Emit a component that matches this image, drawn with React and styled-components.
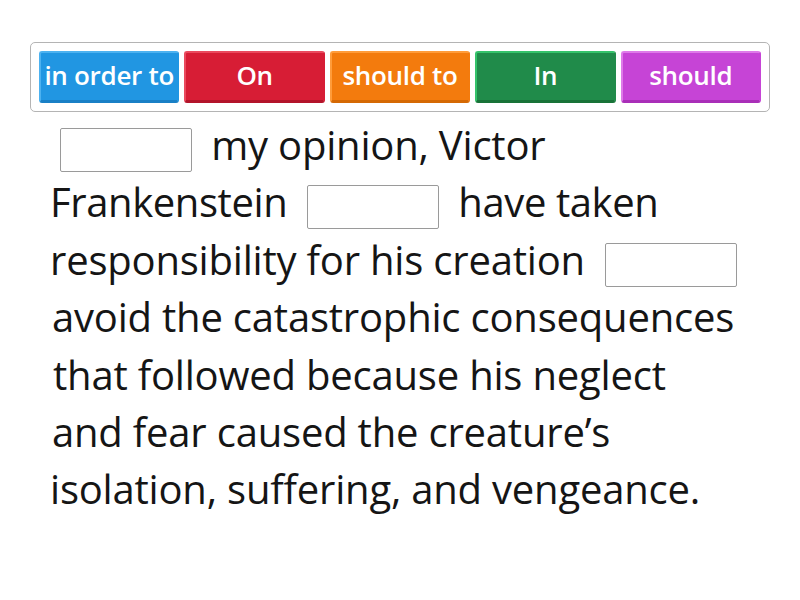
import React from "react";
import styled, { createGlobalStyle } from "styled-components";

const GlobalStyle = createGlobalStyle`
  body {
    margin: 0;
    background: #ffffff;
    font-family: "Open Sans", "Liberation Sans", sans-serif;
  }
`;

const chips = [
  { text: "in order to", body: "#2196e2", light: "#4db2f0", dark: "#1980c6" },
  { text: "On", body: "#d71d35", light: "#ea4a5e", dark: "#b3142a" },
  { text: "should to", body: "#f37b0d", light: "#ff9c3a", dark: "#d56904" },
  { text: "In", body: "#208b4a", light: "#35c36b", dark: "#187338" },
  { text: "should", body: "#c644d6", light: "#de7ae9", dark: "#a92fb8" }
];

const App = () => (
  <Page>
    <GlobalStyle />
    <Bank>
      {chips.map(c => (
        <Chip key={c.text} body={c.body} light={c.light} dark={c.dark}>
          {c.text}
        </Chip>
      ))}
    </Bank>
    <Passage>
      <Line><Blank /> my opinion, Victor</Line>
      <Line tight>Frankenstein <Blank /> have taken</Line>
      <Line>responsibility for his creation <Blank /></Line>
      <Line indent={2}>avoid the catastrophic consequences</Line>
      <Line indent={3}>that followed because his neglect</Line>
      <Line indent={2}>and fear caused the creature’s</Line>
      <Line>isolation, suffering, and vengeance.</Line>
    </Passage>
  </Page>
);

export default App;

const Page = styled.div`
  padding: 42px 0 0 30px;
  width: 740px;
`;

const Bank = styled.div`
  display: flex;
  gap: 5px;
  padding: 8px;
  border: 1px solid #b4b4b4;
  border-radius: 5px;
`;

const Chip = styled.div`
  flex: 1 1 0;
  height: 52px;
  box-sizing: border-box;
  display: flex;
  align-items: center;
  justify-content: center;
  background: ${p => p.body};
  border: 2px solid ${p => p.light};
  border-bottom: 3px solid ${p => p.dark};
  border-right-color: ${p => p.body};
  border-radius: 3px;
  color: #ffffff;
  font-family: "Open Sans", "Liberation Sans", sans-serif;
  font-weight: 600;
  font-size: 26px;
  letter-spacing: -0.3px;
  white-space: nowrap;
  padding-bottom: 3px;
`;

const Passage = styled.div`
  margin: 4px 0 0 20px;
  font-size: 40px;
  line-height: 57.4px;
  color: #151515;
  font-family: "Open Sans", "Liberation Sans", sans-serif;
`;

const Line = styled.div`
  white-space: nowrap;
  padding-left: ${p => p.indent || 0}px;
  letter-spacing: ${p => (p.tight ? "-0.4px" : "-0.2px")};
`;

const Blank = styled.span`
  display: inline-block;
  width: 132px;
  height: 44px;
  box-sizing: border-box;
  margin: 0 9px 0 10px;
  border: 1px solid #9a9a9a;
  border-radius: 2px;
  vertical-align: -12px;
  background: #ffffff;
  letter-spacing: 0;
`;
